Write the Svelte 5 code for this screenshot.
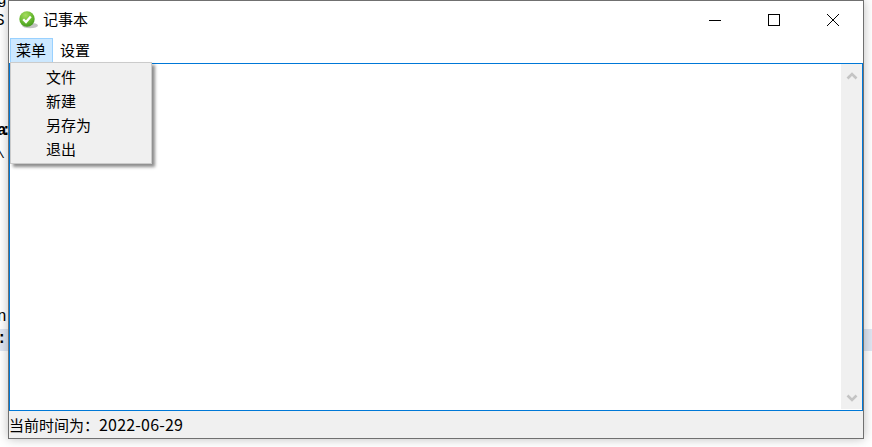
<script lang="ts">
	let menus = ['文件', '新建', '另存为', '退出'];
	let date = '2022-06-29';
</script>

<div class="desktop">
	<!-- bits of the window behind -->
	<div class="behind-row"></div>
	<span class="frag f-top">g</span>
	<span class="frag f-s">S</span>
	<span class="frag bold f-a">a:</span>
	<span class="frag small f-x">\ s</span>
	<span class="frag f-n">n (</span>
	<span class="frag bold f-c">:[</span>

	<div class="window">
		<header class="titlebar">
			<svg class="logo" width="20" height="20" viewBox="0 0 20 20">
				<defs>
					<radialGradient id="ball" cx="0.4" cy="0.25" r="0.85">
						<stop offset="0" stop-color="#a6dc5e" />
						<stop offset="0.6" stop-color="#62b52c" />
						<stop offset="1" stop-color="#3d8f1c" />
					</radialGradient>
				</defs>
				<ellipse cx="12" cy="15.5" rx="8" ry="2.8" fill="#c4c4c4" />
				<circle cx="9" cy="9" r="7.7" fill="url(#ball)" />
				<path d="M5.2 9.2 L8 12 L12.8 6.6" fill="none" stroke="#fff" stroke-width="2.3" />
			</svg>
			<span class="title">记事本</span>
			<div class="controls">
				<button class="ctl" aria-label="最小化">
					<svg width="12" height="12" viewBox="0 0 12 12"><path d="M0 6.5H12" stroke="#000" /></svg>
				</button>
				<button class="ctl" aria-label="最大化">
					<svg width="12" height="12" viewBox="0 0 12 12"><rect x="0.5" y="0.5" width="11" height="11" fill="none" stroke="#000" /></svg>
				</button>
				<button class="ctl" aria-label="关闭">
					<svg width="12" height="12" viewBox="0 0 12 12"><path d="M0 0L12 12M12 0L0 12" stroke="#000" /></svg>
				</button>
			</div>
		</header>

		<nav class="menubar">
			<div class="menu-item active">菜单</div>
			<div class="menu-item">设置</div>
			<ul class="dropdown">
				{#each menus as m}
					<li>{m}</li>
				{/each}
			</ul>
		</nav>

		<div class="editor">
			<div class="text"></div>
			<div class="scrollbar">
				<svg width="12" height="8" viewBox="0 0 12 8"><path d="M1.5 6.5L6 2L10.5 6.5" fill="none" stroke="#c4c4c4" stroke-width="2.6" /></svg>
				<svg width="12" height="8" viewBox="0 0 12 8"><path d="M1.5 1.5L6 6L10.5 1.5" fill="none" stroke="#c4c4c4" stroke-width="2.6" /></svg>
			</div>
		</div>

		<footer class="status">当前时间为{'\uFF1A'}<span class="date">{date}</span></footer>
	</div>
</div>

<style>
	:global(body) {
		background: #fff;
	}

	.desktop {
		position: relative;
		width: 872px;
		height: 447px;
		overflow: hidden;
		background: #fff;
		font-family: 'Noto Sans CJK SC', 'Noto Sans', sans-serif;
		font-size: 15px;
		color: #000;
	}

	.behind-row {
		position: absolute;
		top: 329px;
		left: 0;
		width: 872px;
		height: 22px;
		background: #dfe6f2;
	}

	.frag {
		position: absolute;
		left: -3px;
		font-family: 'Liberation Mono', monospace;
		font-size: 16px;
		line-height: 18px;
		white-space: pre;
	}

	.f-top {
		top: -9px;
	}

	.f-s {
		top: 12px;
		left: -5px;
	}

	.f-a {
		top: 122px;
		letter-spacing: -5px;
	}

	.f-x {
		top: 146px;
	}

	.f-n {
		top: 308px;
		letter-spacing: -3px;
	}

	.f-c {
		top: 330px;
	}

	.small {
		font-size: 13px;
	}

	.bold {
		font-weight: bold;
	}

	.window {
		position: absolute;
		left: 8px;
		top: 0;
		width: 856px;
		height: 439px;
		box-sizing: border-box;
		display: flex;
		flex-direction: column;
		background: #fff;
		border: 1px solid #707070;
		box-shadow: 0 0 10px rgba(0, 0, 0, 0.26);
	}

	.titlebar {
		height: 37px;
		flex: none;
		display: flex;
		align-items: center;
		padding-left: 9px;
	}

	.logo {
		margin-right: 5px;
	}

	.title {
		line-height: 20px;
		margin-top: -2px;
	}

	.controls {
		display: flex;
		margin-left: auto;
		padding-right: 1px;
	}

	.ctl {
		width: 59px;
		height: 37px;
		padding: 0;
		border: 0;
		background: none;
		display: flex;
		align-items: center;
		justify-content: center;
	}

	.menubar {
		position: relative;
		height: 25px;
		flex: none;
		display: flex;
		gap: 1px;
		padding-left: 1px;
		z-index: 2;
	}

	.menu-item {
		box-sizing: border-box;
		height: 25px;
		padding: 0 6px 0 5px;
		line-height: 21px;
		border: 1px solid transparent;
	}

	.menu-item.active {
		background: #cce8ff;
		border-color: #99d1ff;
	}

	.dropdown {
		position: absolute;
		left: 1px;
		top: 24px;
		box-sizing: border-box;
		width: 142px;
		height: 102px;
		margin: 0;
		padding: 2px 0 0 35px;
		list-style: none;
		background: #f0f0f0;
		border: 1px solid #cbcbcb;
		box-shadow: 3px 3px 3px rgba(0, 0, 0, 0.45);
	}

	.dropdown li {
		height: 24px;
		line-height: 24px;
	}

	.editor {
		flex: 1;
		display: flex;
		min-height: 0;
		border: 1px solid #0078d7;
	}

	.text {
		flex: 1;
	}

	.scrollbar {
		width: 21px;
		margin-bottom: 1px;
		background: #f0f0f0;
		display: flex;
		flex-direction: column;
		align-items: center;
		justify-content: space-between;
		padding: 8px 0 7px;
		box-sizing: border-box;
	}

	.status {
		height: 27px;
		flex: none;
		background: #f0f0f0;
		line-height: 27px;
		white-space: nowrap;
	}

	.date {
		font-size: 16px;
		letter-spacing: 0.2px;
	}
</style>
